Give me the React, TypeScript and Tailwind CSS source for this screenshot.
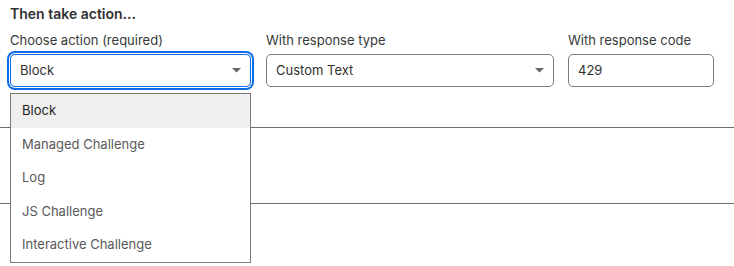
import React from "react";

function Caret() {
  return (
    <svg width="9" height="5" viewBox="0 0 9 5" className="shrink-0">
      <path d="M0 0 L9 0 L4.5 4.5 Z" fill="#666666" />
    </svg>
  );
}

export default function App() {
  const items = ["Block", "Managed Challenge", "Log", "JS Challenge", "Interactive Challenge"];
  return (
    <div
      className="w-[734px] h-[266px] bg-white overflow-hidden relative text-[#313131]"
      style={{ fontFamily: "Inter, 'Liberation Sans', sans-serif" }}
    >
      <div className="pl-[10px] pt-[5px]">
        <div className="text-[14px] font-semibold leading-[18px] text-[#313131]">Then take action...</div>
        <div className="flex mt-[9px]">
          <div className="w-[241px] relative">
            <div className="text-[13px] leading-[16px] text-[#36393a]">Choose action (required)</div>
            <div className="mt-[6px] h-[33px] rounded-[5px] border border-[#0a6ce8] ring-2 ring-[#0a6ce8] ring-offset-1 flex items-center justify-between pl-[9px] pr-[9px] text-[13px]">
              <span>Block</span>
              <Caret />
            </div>
          </div>
          <div className="w-[288px] ml-[15px]">
            <div className="text-[13px] leading-[16px] text-[#36393a]">With response type</div>
            <div className="mt-[6px] h-[33px] rounded-[5px] border border-[#7a7a7a] flex items-center justify-between pl-[9px] pr-[9px] text-[13px]">
              <span>Custom Text</span>
              <Caret />
            </div>
          </div>
          <div className="w-[146px] ml-[14px]">
            <div className="text-[13px] leading-[16px] text-[#36393a]">With response code</div>
            <div className="mt-[6px] h-[33px] rounded-[5px] border border-[#7a7a7a] flex items-center pl-[9px] text-[13px]">
              <span>429</span>
            </div>
          </div>
        </div>
      </div>

      <div className="mt-[40px] h-[77px] border-y border-[#6d6d6d]" />

      <div className="absolute left-[10px] top-[93px] w-[241px] border border-[#7a7a7a] bg-white text-[13px] z-10">
        {items.map((it, i) => (
          <div
            key={it}
            className={
              "h-[33.6px] flex items-center pl-[11px] " +
              (i === 0 ? "bg-[#efefef] text-[#1f1f1f]" : "text-[#595959]")
            }
          >
            {it}
          </div>
        ))}
      </div>
    </div>
  );
}
